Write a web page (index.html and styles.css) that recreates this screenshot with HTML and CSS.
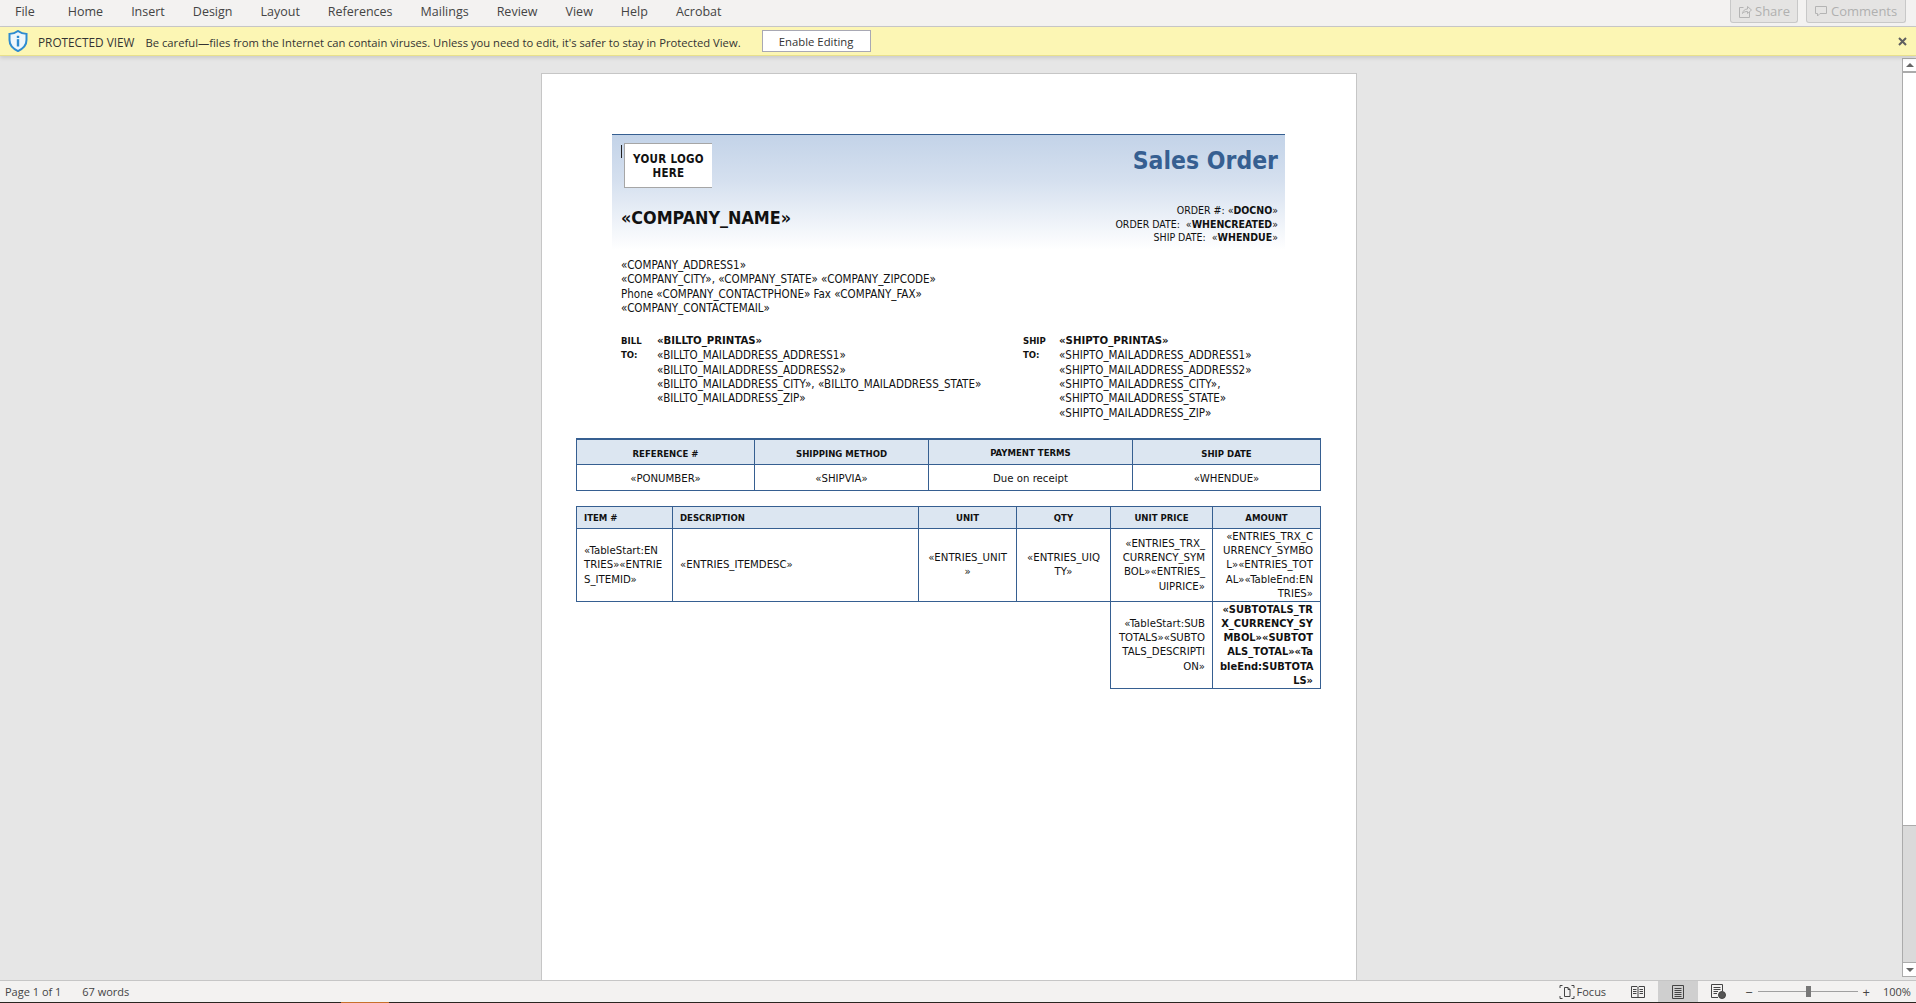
FILE: index.html
```html
<!DOCTYPE html>
<html>
<head>
    <meta charset="utf-8">
    <title>Sales Order - Word</title>
    <link rel="stylesheet" href="styles.css">
</head>
<body>
    <div class="app">
        <div class="menubar">
            <nav class="tabs">
                <span class="file-tab">File</span>
                <span>Home</span>
                <span>Insert</span>
                <span>Design</span>
                <span>Layout</span>
                <span>References</span>
                <span>Mailings</span>
                <span>Review</span>
                <span>View</span>
                <span>Help</span>
                <span>Acrobat</span>
            </nav>
            <div class="menu-actions">
                <div class="menu-btn share-btn">
                    <svg width="14" height="14" viewBox="0 0 14 14" fill="none" stroke="#b4b4b4"><path d="M5.5 3.5H1.5V13.5H11.5V8"/><path d="M4.5 9.5C5 6.5 7 5 9.5 5V2.5L13.5 6L9.5 9.5V7.5C7.5 7.5 5.5 8 4.5 9.5Z"/></svg>
                    Share
                </div>
                <div class="menu-btn comments-btn">
                    <svg width="14" height="14" viewBox="0 0 14 14" fill="none" stroke="#b4b4b4"><path d="M1.5 2.5H12.5V9.5H6L3.5 12V9.5H1.5Z"/></svg>
                    Comments
                </div>
            </div>
        </div>

        <div class="protected-bar">
            <svg class="shield" width="20" height="22" viewBox="0 0 20 24" preserveAspectRatio="none">
                <path d="M10 1C7.500 3 5 4 1.500 4.300V11C1.500 16 5 20.500 10 23C15 20.500 18.500 16 18.500 11V4.300C15 4 12.500 3 10 1Z" fill="#eef6fb" stroke="#2e8bd0" stroke-width="2"/>
                <rect x="8.800" y="10" width="2.400" height="8" fill="#2e8bd0"/>
                <rect x="8.800" y="6.300" width="2.400" height="2.400" fill="#2e8bd0"/>
            </svg>
            <span class="protected-title">PROTECTED VIEW</span>
            <span class="protected-text">Be careful—files from the Internet can contain viruses. Unless you need to edit, it's safer to stay in Protected View.</span>
            <button class="enable-btn">Enable Editing</button>
            <svg class="bar-close" width="9" height="9" viewBox="0 0 9 9" stroke="#5f5f5f" stroke-width="2"><path d="M1 1L8 8M8 1L1 8"/></svg>
        </div>

        <div class="workspace">
            <div class="doc-scroll">
                <div class="page">
                    <div class="doc-head">
                        <div class="caret"></div>
                        <div class="head-top">
                            <div class="logo-box">YOUR LOGO<br>HERE</div>
                            <div class="doc-title">Sales Order</div>
                        </div>
                        <div class="head-bottom">
                            <div class="company-name">«COMPANY_NAME»</div>
                            <div class="order-meta">
                                <div>ORDER #: «<b>DOCNO</b>»</div>
                                <div>ORDER DATE: &nbsp;«<b>WHENCREATED</b>»</div>
                                <div>SHIP DATE: &nbsp;«<b>WHENDUE</b>»</div>
                            </div>
                        </div>
                    </div>

                    <div class="company-info">
                        <div>«COMPANY_ADDRESS1»</div>
                        <div>«COMPANY_CITY», «COMPANY_STATE» «COMPANY_ZIPCODE»</div>
                        <div>Phone «COMPANY_CONTACTPHONE» Fax «COMPANY_FAX»</div>
                        <div>«COMPANY_CONTACTEMAIL»</div>
                    </div>

                    <div class="addresses">
                        <div class="address bill">
                            <div class="address-label">BILL<br>TO:</div>
                            <div>
                                <div class="address-name">«BILLTO_PRINTAS»</div>
                                <div>«BILLTO_MAILADDRESS_ADDRESS1»</div>
                                <div>«BILLTO_MAILADDRESS_ADDRESS2»</div>
                                <div>«BILLTO_MAILADDRESS_CITY», «BILLTO_MAILADDRESS_STATE»</div>
                                <div>«BILLTO_MAILADDRESS_ZIP»</div>
                            </div>
                        </div>
                        <div class="address ship">
                            <div class="address-label">SHIP<br>TO:</div>
                            <div>
                                <div class="address-name">«SHIPTO_PRINTAS»</div>
                                <div>«SHIPTO_MAILADDRESS_ADDRESS1»</div>
                                <div>«SHIPTO_MAILADDRESS_ADDRESS2»</div>
                                <div>«SHIPTO_MAILADDRESS_CITY»,</div>
                                <div>«SHIPTO_MAILADDRESS_STATE»</div>
                                <div>«SHIPTO_MAILADDRESS_ZIP»</div>
                            </div>
                        </div>
                    </div>

                    <table class="terms-table">
                        <colgroup>
                            <col class="t-ref"><col class="t-ship"><col class="t-pay"><col class="t-date">
                        </colgroup>
                        <tr class="head-row">
                            <th>REFERENCE #</th>
                            <th>SHIPPING METHOD</th>
                            <th class="lift">PAYMENT TERMS</th>
                            <th>SHIP DATE</th>
                        </tr>
                        <tr class="value-row">
                            <td>«PONUMBER»</td>
                            <td>«SHIPVIA»</td>
                            <td>Due on receipt</td>
                            <td>«WHENDUE»</td>
                        </tr>
                    </table>

                    <table class="items-table">
                        <colgroup>
                            <col class="i-item"><col class="i-desc"><col class="i-unit"><col class="i-qty"><col class="i-price"><col class="i-amount">
                        </colgroup>
                        <tr class="head-row">
                            <th class="left">ITEM #</th>
                            <th class="left">DESCRIPTION</th>
                            <th>UNIT</th>
                            <th>QTY</th>
                            <th>UNIT PRICE</th>
                            <th>AMOUNT</th>
                        </tr>
                        <tr class="entry-row">
                            <td class="left">«TableStart:EN<br>TRIES»«ENTRIE<br>S_ITEMID»</td>
                            <td class="left">«ENTRIES_ITEMDESC»</td>
                            <td>«ENTRIES_UNIT<br>»</td>
                            <td>«ENTRIES_UIQ<br>TY»</td>
                            <td class="right">«ENTRIES_TRX_<br>CURRENCY_SYM<br>BOL»«ENTRIES_<br>UIPRICE»</td>
                            <td class="right">«ENTRIES_TRX_C<br>URRENCY_SYMBO<br>L»«ENTRIES_TOT<br>AL»«TableEnd:EN<br>TRIES»</td>
                        </tr>
                        <tr class="total-row">
                            <td class="blank" colspan="4"></td>
                            <td class="right">«TableStart:SUB<br>TOTALS»«SUBTO<br>TALS_DESCRIPTI<br>ON»</td>
                            <td class="right strong">«SUBTOTALS_TR<br>X_CURRENCY_SY<br>MBOL»«SUBTOT<br>ALS_TOTAL»«Ta<br>bleEnd:SUBTOTA<br>LS»</td>
                        </tr>
                    </table>
                </div>
            </div>
            <div class="scrollbar">
                <div class="scroll-btn up"></div>
                <div class="scroll-thumb"></div>
                <div class="scroll-track"></div>
                <div class="scroll-btn down"></div>
            </div>
        </div>

        <div class="statusbar">
            <div class="status-left">
                <span>Page 1 of 1</span>
                <span class="word-count">67 words</span>
            </div>
            <div class="status-right">
                <div class="focus">
                    <svg width="16" height="16" viewBox="0 0 16 16" fill="none" stroke="#444"><path d="M1 4V1.500H3.500M12.500 1.500H15V4M15 12V14.500H12.500M3.500 14.500H1V12"/><path d="M5.500 3.500H9L11 5.500V12.500H5.500Z"/><path d="M9 3.500V5.500H11"/></svg>
                    Focus
                </div>
                <div class="view-btn">
                    <svg width="14" height="14" viewBox="0 0 14 14" fill="none" stroke="#444"><path d="M.5 1.500H6L7 2.500L8 1.500H13.500V12.500H.5ZM7 2.500V12.500"/><path d="M2 4.500H5.500M2 6.500H5.500M2 8.500H5.500M8.500 4.500H12M8.500 6.500H12M8.500 8.500H12"/></svg>
                </div>
                <div class="view-btn active">
                    <svg width="12" height="14" viewBox="0 0 12 14" fill="none" stroke="#444"><path d="M.5 .500H11.500V13.500H.5Z"/><path d="M2.500 3.500H9.500M2.500 5.500H9.500M2.500 7.500H9.500M2.500 9.500H9.500M2.500 11.500H9.500"/></svg>
                </div>
                <div class="view-btn">
                    <svg width="15" height="15" viewBox="0 0 15 15" fill="none" stroke="#444"><path d="M7 13.500H.5V.500H11.500V7"/><path d="M2.500 3.500H9.500M2.500 5.500H9.500M2.500 7.500H7M2.500 9.500H6"/><circle cx="11" cy="11" r="3.500" fill="#555"/></svg>
                </div>
                <div class="zoom-ctl">
                    <span class="zoom-sign">−</span>
                    <div class="zoom-slider"><div class="zoom-knob"></div></div>
                    <span class="zoom-sign">+</span>
                </div>
                <span class="zoom-value">100%</span>
            </div>
        </div>
        <div class="taskbar-edge"><div class="taskbar-active"></div></div>
    </div>
</body>
</html>
```
FILE: styles.css
```css
* {
    box-sizing: border-box;
}
html, body {
    margin: 0;
    height: 100%;
    overflow: hidden;
}
body {
    font-family: "Open Sans", "Noto Sans", sans-serif;
    font-size: 12px;
    color: #444;
}
.app {
    display: flex;
    flex-direction: column;
    height: 1003px;
}

/* ribbon tabs */
.menubar {
    display: flex;
    justify-content: space-between;
    height: 27px;
    flex-shrink: 0;
    padding: 0 0 0 15px;
    background: #f3f2f1;
    border-bottom: 1px solid #c9c9c9;
}
.tabs {
    display: flex;
    gap: 28px;
    align-items: center;
    height: 22px;
    font-size: 12.500px;
    color: #444;
}
.file-tab {
    margin-right: 5px;
}
.menu-actions {
    display: flex;
    gap: 8px;
    padding-right: 10px;
}
.menu-btn {
    display: flex;
    align-items: center;
    gap: 3px;
    height: 23px;
    padding: 0 7px;
    background: #e5e4e3;
    border: 1px solid #c8c8c8;
    border-top: none;
    border-radius: 0 0 3px 3px;
    color: #b0b0b0;
    font-size: 13px;
}
.share-btn {
    width: 68px;
}
.comments-btn {
    width: 100px;
}

/* protected view */
.protected-bar {
    display: flex;
    align-items: center;
    height: 29px;
    flex-shrink: 0;
    padding: 0 8px;
    background: #fcf6b4;
    border-bottom: 1px solid #e8e08c;
    box-shadow: 0 2px 4px rgba(0,0,0,0.12);
    position: relative;
    color: #333;
}
.shield {
    margin-right: 10px;
}
.protected-title {
    margin-right: 11px;
    padding-top: 2px;
    font-size: 11.800px;
}
.protected-text {
    padding-top: 2px;
    font-size: 11.240px;
}
.enable-btn {
    width: 109px;
    height: 22px;
    margin-left: 21px;
    padding: 0;
    background: #fff;
    border: 1px solid #a8a8b4;
    color: #333;
    font-family: inherit;
    font-size: 11.300px;
}
.bar-close {
    margin-left: auto;
    margin-right: 1px;
}

/* document area */
.workspace {
    display: flex;
    flex: 1;
    min-height: 0;
    background: #e6e6e6;
}
.doc-scroll {
    flex: 1;
    overflow: hidden;
    padding: 17px 0 0 541px;
}
.page {
    width: 816px;
    height: 1056px;
    padding: 60px 35px 0;
    background: #fff;
    border: 1px solid #c6c6c6;
    font-family: "DejaVu Sans", sans-serif;
    font-stretch: condensed;
    font-size: 11.500px;
    line-height: 14.300px;
    color: #111;
}
.doc-head {
    position: relative;
    width: 673px;
    height: 116px;
    margin-left: 35px;
    padding: 8px 7px 0 12px;
    background: linear-gradient(#c3d3e8 0%, #d5e0ef 40%, #fff 100%);
    border-top: 1px solid #365f91;
}
.caret {
    position: absolute;
    left: 9px;
    top: 10px;
    width: 1px;
    height: 13px;
    background: #222;
}
.head-top {
    display: flex;
    justify-content: space-between;
}
.logo-box {
    width: 88px;
    height: 45px;
    padding-top: 8px;
    background: #fff;
    border: 1px solid #a6a6a6;
    border-right: none;
    text-align: center;
    font-size: 11.500px;
    line-height: 14px;
    font-weight: bold;
    letter-spacing: 0.3px;
}
.doc-title {
    font-size: 24.500px;
    line-height: 35.500px;
    font-weight: bold;
    color: #365f91;
}
.head-bottom {
    display: flex;
    justify-content: space-between;
    margin-top: 12px;
    margin-left: -3px;
}
.company-name {
    font-size: 17.800px;
    font-weight: bold;
    line-height: 36px;
}
.order-meta {
    padding-top: 4px;
    text-align: right;
    font-size: 10.500px;
    line-height: 13.500px;
}
.company-info {
    margin: 8px 0 0 44px;
}
.addresses {
    display: flex;
    margin: 19px 0 0 44px;
}
.address {
    display: flex;
}
.bill {
    width: 402px;
}
.address-label {
    width: 36px;
    font-size: 9.500px;
    font-weight: bold;
}
.address-name {
    font-size: 11.300px;
    font-weight: bold;
}

/* tables */
table {
    border-collapse: collapse;
    table-layout: fixed;
    width: 744px;
    margin-left: -1px;
}
th, td {
    padding: 0 7px;
    border: 1px solid #365f91;
    text-align: center;
    white-space: nowrap;
}
td {
    font-size: 11.300px;
}
th {
    background: #dce6f1;
    font-size: 9.500px;
    font-weight: bold;
}
.terms-table {
    margin-top: 18px;
    border-top: 2px solid #365f91;
}
.terms-table th,
.terms-table td {
    padding-top: 3px;
}
.terms-table th.lift {
    padding-top: 1px;
}
.terms-table .head-row {
    height: 26px;
}
.value-row {
    height: 26px;
}
.items-table {
    margin-top: 15px;
}
.items-table .head-row {
    height: 22px;
}
.entry-row {
    height: 73px;
}
.total-row {
    height: 87px;
}
.t-ref { width: 178px; }
.t-ship { width: 174px; }
.t-pay { width: 204px; }
.t-date { width: 188px; }
.i-item { width: 96px; }
.i-desc { width: 246px; }
.i-unit { width: 98px; }
.i-qty { width: 94px; }
.i-price { width: 102px; }
.i-amount { width: 108px; }
.left {
    text-align: left;
}
.right {
    text-align: right;
}
td.strong {
    font-size: 11px;
    font-weight: bold;
}
td.blank {
    border-left: none;
    border-bottom: none;
}

/* scrollbar */
.scrollbar {
    display: flex;
    flex-direction: column;
    width: 14px;
    flex-shrink: 0;
    margin: 2px 0 3px;
    border-left: 1px solid #ababab;
}
.scroll-btn {
    display: flex;
    align-items: center;
    justify-content: center;
    height: 15px;
    flex-shrink: 0;
    background: #fff;
    border-top: 1px solid #ababab;
}
.scroll-btn.up {
    border-bottom: 2px solid #ababab;
}
.scroll-btn.down {
    border-bottom: 1px solid #ababab;
}
.scroll-btn.up::before,
.scroll-btn.down::before {
    content: "";
    border-left: 4px solid transparent;
    border-right: 4px solid transparent;
}
.scroll-btn.up::before {
    border-bottom: 4px solid #666;
}
.scroll-btn.down::before {
    border-top: 4px solid #666;
}
.scroll-thumb {
    height: 753px;
    flex-shrink: 0;
    background: #fff;
    border-bottom: 1px solid #ababab;
}
.scroll-track {
    flex: 1;
    background: #dadada;
}

/* status bar */
.statusbar {
    display: flex;
    justify-content: space-between;
    align-items: center;
    height: 22px;
    flex-shrink: 0;
    padding-left: 5px;
    background: #f3f2f1;
    border-top: 1px solid #c6c6c6;
    font-size: 11px;
    color: #444;
}
.word-count {
    margin-left: 18px;
}
.status-right {
    display: flex;
    align-items: center;
    height: 100%;
}
.focus {
    display: flex;
    align-items: center;
    gap: 2px;
    margin-right: 12px;
}
.view-btn {
    display: flex;
    align-items: center;
    justify-content: center;
    width: 40px;
    height: 100%;
}
.view-btn.active {
    background: #cfcfcf;
}
.zoom-ctl {
    display: flex;
    align-items: center;
    gap: 5px;
    margin-left: 7px;
}
.zoom-sign {
    font-size: 13px;
}
.zoom-slider {
    position: relative;
    width: 100px;
    height: 1px;
    background: #a0a0a0;
}
.zoom-knob {
    position: absolute;
    left: 48px;
    top: -5px;
    width: 5px;
    height: 11px;
    background: #777;
}
.zoom-value {
    width: 33px;
    margin-left: 13px;
}
.taskbar-edge {
    height: 1px;
    background: #2a2520;
}
.taskbar-active {
    width: 48px;
    height: 100%;
    margin-left: 341px;
    background: #c8702a;
}
```
